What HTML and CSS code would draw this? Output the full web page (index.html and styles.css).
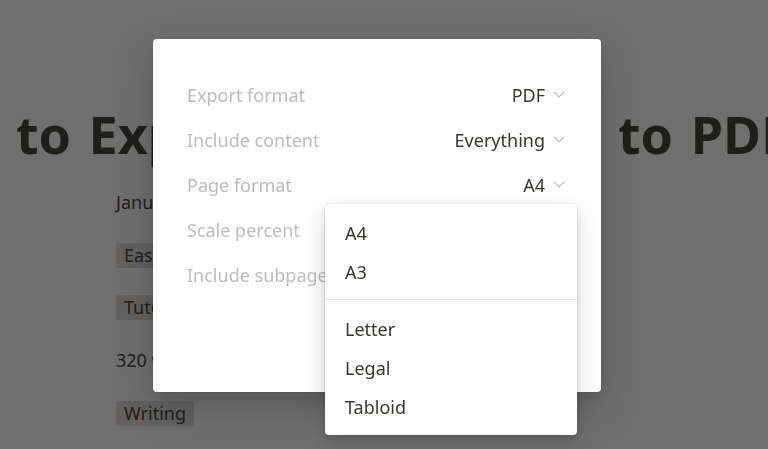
FILE: index.html
```html
<!DOCTYPE html>
<html>
<head>
<meta charset="utf-8">
<link rel="stylesheet" href="styles.css">
</head>
<body>
<main class="page">
  <h1 class="title">to Export Notion Page to PDF</h1>
  <div class="props">
    <div class="prop">January 24, 2023</div>
    <div class="prop"><span class="tag">Easy</span></div>
    <div class="prop"><span class="tag">Tutorial</span></div>
    <div class="prop">320 words</div>
    <div class="prop"><span class="tag">Writing</span></div>
  </div>
</main>
<div class="overlay"></div>
<section class="modal">
  <div class="row"><span class="label">Export format</span><span class="value">PDF<svg class="chev" viewBox="0 0 12 7"><path d="M1 1l5 5 5-5"/></svg></span></div>
  <div class="row"><span class="label">Include content</span><span class="value">Everything<svg class="chev" viewBox="0 0 12 7"><path d="M1 1l5 5 5-5"/></svg></span></div>
  <div class="row"><span class="label">Page format</span><span class="value">A4<svg class="chev" viewBox="0 0 12 7"><path d="M1 1l5 5 5-5"/></svg></span></div>
  <div class="row"><span class="label">Scale percent</span></div>
  <div class="row"><span class="label">Include subpages</span></div>
</section>
<div class="menu">
  <div class="group">
    <div class="item">A4</div>
    <div class="item">A3</div>
  </div>
  <div class="divider"></div>
  <div class="group">
    <div class="item">Letter</div>
    <div class="item">Legal</div>
    <div class="item">Tabloid</div>
  </div>
</div>
</body>
</html>
```
FILE: styles.css
```css
html, body {
  margin: 0;
  padding: 0;
  width: 768px;
  height: 449px;
  overflow: hidden;
  background: #ffffff;
  font-family: "Noto Sans", "Open Sans", sans-serif;
  color: #37352f;
}
.page {
  padding: 0 0 0 16px;
}
.title {
  margin: 0;
  padding-top: 102px;
  font-size: 52px;
  line-height: 64px;
  font-weight: 700;
  white-space: nowrap;
  word-spacing: 4px;
}
.props {
  padding-left: 100px;
  padding-top: 24px;
  display: flex;
  flex-direction: column;
}
.prop {
  height: 52.7px;
  display: flex;
  align-items: flex-start;
  font-size: 18px;
  line-height: 25px;
}
.tag {
  background: #dedcda;
  border-radius: 3px;
  padding: 0 8px;
  line-height: 25px;
}
.overlay {
  position: fixed;
  inset: 0;
  background: rgba(15, 15, 15, 0.6);
}
.modal {
  position: absolute;
  left: 153px;
  top: 39px;
  width: 448px;
  height: 353px;
  box-sizing: border-box;
  padding: 33px 36px 0 34px;
  background: #ffffff;
  border-radius: 4px;
  box-shadow: rgba(15, 15, 15, 0.05) 0 0 0 1px, rgba(15, 15, 15, 0.1) 0 5px 10px, rgba(15, 15, 15, 0.2) 0 15px 40px;
  display: flex;
  flex-direction: column;
}
.row {
  height: 45px;
  display: flex;
  align-items: center;
  justify-content: space-between;
  font-size: 18px;
}
.label {
  color: #bcbcbc;
}
.value {
  display: flex;
  align-items: center;
  gap: 8px;
  color: #37352f;
}
.chev {
  width: 12px;
  height: 7px;
  fill: none;
  stroke: #bdbdbd;
  stroke-width: 1.2;
}
.menu {
  position: absolute;
  left: 325px;
  top: 204px;
  width: 252px;
  height: 231px;
  box-sizing: border-box;
  padding: 9px 0 8px;
  background: #ffffff;
  border-radius: 4px;
  box-shadow: rgba(15, 15, 15, 0.06) 0 0 0 1px, rgba(15, 15, 15, 0.1) 0 3px 6px, rgba(15, 15, 15, 0.15) 0 9px 24px;
  display: flex;
  flex-direction: column;
}
.item {
  height: 39px;
  display: flex;
  align-items: center;
  padding-left: 20px;
  font-size: 18px;
  color: #37352f;
}
.divider {
  height: 1px;
  background: #e9e9e7;
  margin: 8px 0 9px;
}
```
